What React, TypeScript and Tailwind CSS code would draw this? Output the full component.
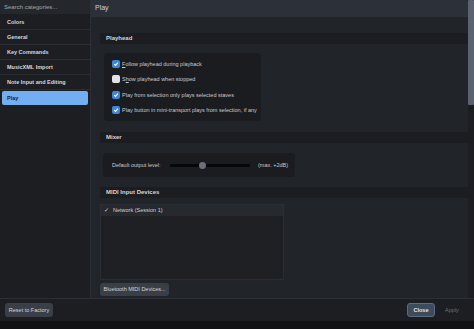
import React from "react";

const categories = [
  "Colors",
  "General",
  "Key Commands",
  "MusicXML Import",
  "Note Input and Editing",
  "Play",
];

const Check = ({ on }: { on: boolean }) =>
  on ? (
    <span className="w-[8px] h-[8px] rounded-[2px] bg-[#3f86d8] flex items-center justify-center">
      <svg width="6" height="6" viewBox="0 0 10 10">
        <path d="M2 5.2 L4.2 7.4 L8.2 2.6" stroke="#fff" strokeWidth="1.8" fill="none" />
      </svg>
    </span>
  ) : (
    <span className="w-[8px] h-[8px] rounded-[2px] bg-[#e2e3e5]" />
  );

const SectionBar = ({ title }: { title: string }) => (
  <div className="h-[11px] bg-[#1b1d21] flex items-center pl-[6px] text-[6px] font-semibold text-[#d4d6da]">
    {title}
  </div>
);

export default function App() {
  return (
    <div
      className="w-[474px] h-[329px] flex flex-col bg-[#111214] overflow-hidden text-[#c9ccd1]"
      style={{ fontFamily: '"Liberation Sans", Arial, sans-serif' }}
    >
      <div className="flex h-[298px]">
        {/* sidebar */}
        <div className="w-[90px] bg-[#1c1e22] flex flex-col">
          <div className="h-[14px] bg-[#24272c] flex items-center px-[4px] text-[6px] text-[#a3a7ad]">
            Search categories...
          </div>
          <div className="flex flex-col pt-[1px]">
            {categories.map((c) =>
              c === "Play" ? (
                <div
                  key={c}
                  className="h-[14px] mx-[2px] mt-[1px] rounded-[2px] bg-[#74aef2] flex items-center px-[5px] text-[5.5px] font-semibold text-[#1a2533]"
                >
                  {c}
                </div>
              ) : (
                <div
                  key={c}
                  className="h-[15px] border-b border-[#2a2d32] flex items-center px-[7px] text-[5.5px] font-semibold text-[#d6d8dc]"
                >
                  {c}
                </div>
              )
            )}
          </div>
        </div>

        {/* main */}
        <div className="flex-1 flex flex-col bg-[#212429] border-l border-[#2c2f35]">
          <div className="h-[17px] bg-[#2c3038] flex items-center px-[4px] text-[7px] text-[#d0d3d8]">
            Play
          </div>
          <div className="flex-1 flex flex-col pl-[9px] pt-[16px] bg-[#212429]">
            <SectionBar title="Playhead" />
            <div className="ml-[4px] mt-[9px] w-[157px] h-[68px] rounded-[4px] bg-[#1a1c20] flex flex-col justify-center gap-[7px] pl-[8px] text-[5.5px] text-[#c8cbd0]">
              <div className="flex items-center gap-[2px]">
                <Check on />
                <span>
                  <span className="underline underline-offset-1">F</span>ollow playhead during playback
                </span>
              </div>
              <div className="flex items-center gap-[2px]">
                <Check on={false} />
                <span>
                  S<span className="underline underline-offset-1">h</span>ow playhead when stopped
                </span>
              </div>
              <div className="flex items-center gap-[2px]">
                <Check on />
                <span>Play from selection only plays selected staves</span>
              </div>
              <div className="flex items-center gap-[2px]">
                <Check on />
                <span>Play button in mini-transport plays from selection, if any</span>
              </div>
            </div>

            <div className="mt-[11px]">
              <SectionBar title="Mixer" />
            </div>
            <div className="ml-[3px] mt-[10px] w-[192px] h-[24px] rounded-[4px] bg-[#1a1c20] flex items-center pl-[9px] text-[5.5px] text-[#c8cbd0]">
              <span className="w-[58px]">Default output level:</span>
              <div className="relative w-[80px] h-[3px] bg-[#060708] rounded-[1px]">
                <span className="absolute left-[29px] top-[-2px] w-[7px] h-[7px] rounded-full bg-[#6b7078]" />
              </div>
              <span className="ml-[8px]">(max. +2dB)</span>
            </div>

            <div className="mt-[10px]">
              <SectionBar title="MIDI Input Devices" />
            </div>
            <div className="mt-[6px] w-[184px] h-[76px] bg-[#1e2024] border border-[#2a2d32] flex flex-col">
              <div className="h-[11px] bg-[#26292e] flex items-center pl-[3px] gap-[4px] text-[5.5px] text-[#cdd0d5]">
                <span>✓</span>
                <span>Network (Session 1)</span>
              </div>
            </div>
            <div className="mt-[3px] w-[69px] h-[13px] rounded-[3px] bg-[#3a3f47] flex items-center justify-center text-[5.5px] text-[#d3d6da]">
              Bluetooth MIDI Devices...
            </div>
          </div>
        </div>

        {/* scrollbar */}
        <div className="w-[6px] bg-[#1b1d20] flex flex-col">
          <div className="h-[105px] bg-[#5b6270] rounded-[1px]" />
        </div>
      </div>

      {/* footer */}
      <div className="h-[23px] bg-[#1c1e22] border-t border-[#2c2f35] flex items-center px-[5px]">
        <div className="w-[48px] h-[14px] rounded-[3px] bg-[#3a3f47] flex items-center justify-center text-[5.5px] text-[#d3d6da]">
          Reset to Factory
        </div>
        <div className="flex-1" />
        <div className="w-[28px] h-[14px] rounded-[3px] bg-[#3e4b5c] border border-[#5c6b80] flex items-center justify-center text-[5.5px] font-semibold text-[#e0e4ea]">
          Close
        </div>
        <div className="w-[34px] flex items-center justify-center text-[5.5px] text-[#6c7078]">
          Apply
        </div>
      </div>
      <div className="flex-1 bg-[#111214]" />
    </div>
  );
}
